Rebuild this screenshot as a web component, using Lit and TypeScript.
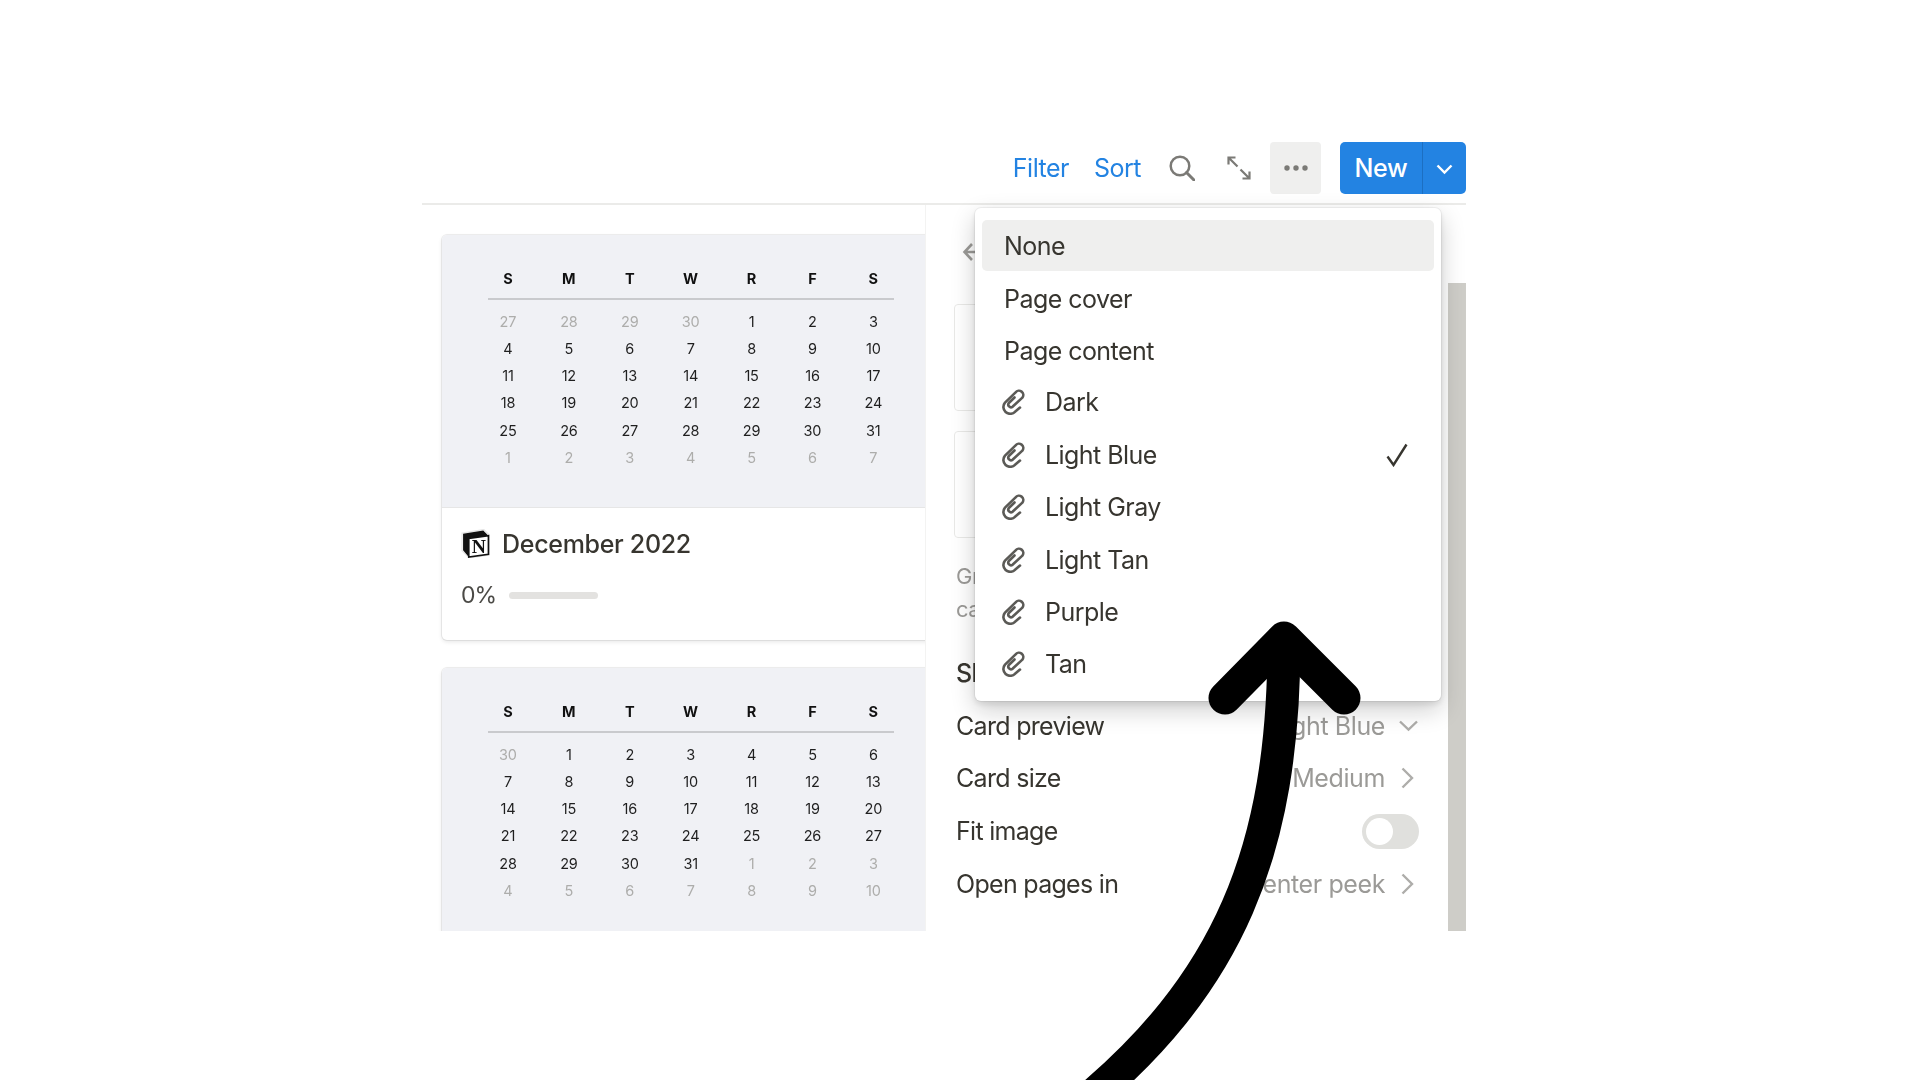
import { LitElement, html, css, svg } from "lit";
import { customElement } from "lit/decorators.js";

type Day = [string, boolean];

function month(prevStart: number, prevEnd: number, days: number, trail: number): Day[] {
  const out: Day[] = [];
  for (let d = prevStart; d <= prevEnd; d++) out.push([String(d), true]);
  for (let d = 1; d <= days; d++) out.push([String(d), false]);
  for (let d = 1; d <= trail; d++) out.push([String(d), true]);
  return out;
}

const DEC = month(27, 30, 31, 7);
const JAN = month(30, 30, 31, 10);
const HEAD = ["S", "M", "T", "W", "R", "F", "S"];
const OPTIONS = ["Dark", "Light Blue", "Light Gray", "Light Tan", "Purple", "Tan"];

const clip = svg`<path d="M19 18.6 14 22.8A6.8 6.8 0 0 1 4 13.6L14.6 3.4A3.8 3.8 0 0 1 21.4 8.6L11.5 17.8A2.7 2.7 0 0 1 7.8 14L13.5 8.5" fill="none" stroke="currentColor" stroke-width="2.6" stroke-linecap="round" stroke-linejoin="round"/>`;

@customElement("app-root")
export class AppRoot extends LitElement {
  static styles = css`
    :host { display: block; width: 1920px; height: 1080px; background: #fff; overflow: hidden; position: relative;
      font-family: Inter, "Liberation Sans", sans-serif; color: #37352f; }
    .page { padding: 142px 0 0 422px; box-sizing: border-box; height: 1080px; filter: blur(0.35px); }
    .frame { width: 1044px; height: 789px; display: flex; flex-direction: column; position: relative; }
    .toolbar { height: 63px; flex: none; box-sizing: border-box; padding-bottom: 9px; display: flex; align-items: stretch; justify-content: flex-end; border-bottom: 2px solid #ebebe9; }
    .link { color: #2383e2; font-size: 25px; letter-spacing: -0.5px; align-self: center; }
    .filter { margin-right: 25px; }
    .sort { margin-right: 28px; }
    .tool { display: block; align-self: center; }
    .search { margin-right: 32px; }
    .expand { margin-right: 19px; }
    .more { width: 51px; background: #efefee; border-radius: 4px; display: flex; align-items: center; justify-content: center; margin-right: 19px; }
    .new { width: 126px; background: #2383e2; border-radius: 5px; display: flex; color: #fff; }
    .new-label { width: 83px; box-sizing: border-box; border-right: 1px solid #1c6fc2; font-size: 25px; font-weight: 500; display: flex; align-items: center; justify-content: center; letter-spacing: -0.3px; }
    .new-caret { flex: 1; display: flex; align-items: center; justify-content: center; padding-top: 2px; }
    .body { flex: 1; display: flex; min-height: 0; overflow: hidden; }
    .cards { width: 503px; flex: none; overflow: hidden; box-sizing: border-box; padding: 30px 0 0 20px; }
    .card { width: 540px; border-radius: 5px; box-shadow: 0 0 0 1px rgba(15,15,15,.07), 0 2px 4px rgba(15,15,15,.1); margin-bottom: 28px; background: #fff; overflow: hidden; }
    .cover { height: 273px; box-sizing: border-box; background: #f0f1f5; border-bottom: 1px solid #e6e6e6; padding: 30px 0 0 35.5px; }
    .cal { width: 426.3px; display: grid; grid-template-columns: repeat(7, 1fr); grid-template-rows: 27.2px 15.6px; grid-auto-rows: 27.2px; align-items: center; text-align: center; font-size: 14.5px; color: #1f1f1f; letter-spacing: -0.2px; }
    .h { font-weight: 700; color: #111; font-size: 14.5px; letter-spacing: 0; }
    .rule { grid-column: 1 / -1; height: 1.5px; background: #c9cacd; margin: 6px 10px 0; align-self: start; }
    .off { color: #adadab; }
    .meta { height: 132px; box-sizing: border-box; padding: 17.5px 0 0 19px; }
    .title { display: flex; align-items: center; gap: 12px; font-size: 25px; font-weight: 500; height: 36px; letter-spacing: -0.3px; }
    .progress { display: flex; align-items: center; gap: 13px; margin-top: 16.5px; height: 34px; font-size: 23px; letter-spacing: -0.9px; color: #4b4a46; }
    .bar { width: 89px; height: 7px; border-radius: 4px; background: #e3e2e0; }
    .panel { flex: 1; display: flex; box-shadow: inset 1px 0 0 #f3f3f2; }
    .settings { flex: 1; box-sizing: border-box; padding: 37px 29px 0 31px; }
    .back { display: block; margin-left: 6px; height: 20px; }
    .box { margin: 0 0 20px -2px; height: 107px; box-sizing: border-box; border: 1px solid #e9e9e7; border-radius: 4px; }
    .box.first { margin-top: 42px; }
    .note { color: #9b9a97; font-size: 22px; letter-spacing: -0.5px; line-height: 33px; margin-top: 22px; }
    .row { height: 52.8px; display: flex; align-items: center; justify-content: space-between; font-size: 25px; letter-spacing: -0.7px; }
    .row.head { margin-top: 20.5px; font-weight: 500; }
    .value { color: #9b9a97; display: flex; align-items: center; gap: 14px; letter-spacing: -0.4px; }
    .chev { display: block; }
    .toggle { width: 57px; height: 35px; border-radius: 18px; background: #e0e0dd; padding: 4px; box-sizing: border-box; display: flex; }
    .knob { width: 27px; height: 27px; border-radius: 50%; background: #fff; }
    .scroll { width: 18px; flex: none; margin-top: 78px; background: #cecdc8; }
    .menu { position: absolute; left: 553px; top: 66px; width: 466px; height: 493px; box-sizing: border-box; padding: 12px 7px 0; background: #fff; border-radius: 6px;
      box-shadow: 0 0 0 1px rgba(15,15,15,.05), 0 3px 6px rgba(15,15,15,.1), 0 9px 24px rgba(15,15,15,.2); font-size: 25px; letter-spacing: -0.55px; }
    .item { height: 52.4px; display: flex; align-items: center; box-sizing: border-box; padding: 0 24px 0 22px; border-radius: 5px; }
    .item.sel { height: 51px; margin-bottom: 1.4px; background: #efefee; }
    .item.opt { padding-bottom: 2px; }
    .item svg.clip { color: #5b5a56; margin-left: -3px; margin-right: 18px; flex: none; }
    .item .check { margin-left: auto; margin-right: 2px; }
    .arrow { position: absolute; left: 0; top: 0; pointer-events: none; filter: blur(0.35px); }
  `;

  private calendar(days: Day[]) {
    return html`<div class="cal">
      ${HEAD.map((h) => html`<div class="h">${h}</div>`)}
      <div class="rule"></div>
      ${days.map(([d, off]) => html`<div class=${off ? "off" : ""}>${d}</div>`)}
    </div>`;
  }

  private chevRight() {
    return html`<svg class="chev" width="20" height="22" viewBox="0 0 20 22"><path d="M3.5 1.5 13 11 3.5 20.5" fill="none" stroke="#aeadaa" stroke-width="2.4"/></svg>`;
  }

  render() {
    return html`<div class="page"><div class="frame">
      <div class="toolbar">
        <span class="link filter">Filter</span>
        <span class="link sort">Sort</span>
        <svg class="tool search" width="26" height="26" viewBox="0 0 26 26"><circle cx="11" cy="11" r="9.3" fill="none" stroke="#7b7a76" stroke-width="2.5"/><path d="M17.5 17.5 25 25" stroke="#7b7a76" stroke-width="3" stroke-linecap="round"/></svg>
        <svg class="tool expand" width="24" height="24" viewBox="0 0 24 24" fill="none" stroke="#7b7a76" stroke-width="2.2"><path d="M1.5 8.5V1.5H8.5M1.5 1.5 10.5 10.5M22.5 15.5V22.5H15.5M22.5 22.5 13.5 13.5"/></svg>
        <div class="more"><svg width="24" height="6" viewBox="0 0 24 6" fill="#7b7a76"><circle cx="3" cy="3" r="2.7"/><circle cx="12" cy="3" r="2.7"/><circle cx="21" cy="3" r="2.7"/></svg></div>
        <div class="new">
          <div class="new-label">New</div>
          <div class="new-caret"><svg width="17" height="11" viewBox="0 0 17 11"><path d="M1.5 1.5 8.5 8.5 15.5 1.5" fill="none" stroke="#fff" stroke-width="2.4"/></svg></div>
        </div>
      </div>
      <div class="body">
        <div class="cards">
          <div class="card">
            <div class="cover">${this.calendar(DEC)}</div>
            <div class="meta">
              <div class="title">
                <svg width="29" height="29" viewBox="0 0 28 28"><path d="M1 4 22 .5 27.5 6V25L8 28 1 21Z" fill="#fff" stroke="#e6e6e6" stroke-width="1.2"/><path d="M2 4.5 21.5 1.5 26.5 6.5 7.5 9V27L2 20.5Z" fill="#111"/><path d="M7.5 9 26.5 6.5V24.5L7.5 27Z" fill="#fff" stroke="#111" stroke-width="1.6"/><text x="17" y="23" text-anchor="middle" font-family="Liberation Serif, serif" font-weight="700" font-size="19" fill="#111">N</text></svg>
                <span>December 2022</span>
              </div>
              <div class="progress"><span>0%</span><div class="bar"></div></div>
            </div>
          </div>
          <div class="card">
            <div class="cover">${this.calendar(JAN)}</div>
          </div>
        </div>
        <div class="panel">
          <div class="settings">
            <svg class="back" width="20" height="20" viewBox="0 0 20 20"><path d="M18 10H3M10 2 2.5 10 10 18" fill="none" stroke="#9b9a97" stroke-width="2.6"/></svg>
            <div class="box first"></div>
            <div class="box"></div>
            <div class="note">Group<br />cards</div>
            <div class="row head"><span>Show</span></div>
            <div class="row"><span>Card preview</span><span class="value">Light Blue<svg class="chev" width="20" height="20" viewBox="0 0 20 20"><path d="M1 5.5 9.5 13.5 18 5.5" fill="none" stroke="#aeadaa" stroke-width="2.4"/></svg></span></div>
            <div class="row"><span>Card size</span><span class="value">Medium${this.chevRight()}</span></div>
            <div class="row"><span>Fit image</span><div class="toggle"><div class="knob"></div></div></div>
            <div class="row"><span>Open pages in</span><span class="value">Center peek${this.chevRight()}</span></div>
          </div>
          <div class="scroll"></div>
        </div>
      </div>
      <div class="menu">
        <div class="item sel">None</div>
        <div class="item">Page cover</div>
        <div class="item">Page content</div>
        ${OPTIONS.map((o) => html`<div class="item opt">
          <svg class="clip" width="26" height="26" viewBox="0 0 26 26">${clip}</svg>
          <span>${o}</span>
          ${o === "Light Blue"
            ? html`<svg class="check" width="22" height="24" viewBox="0 0 22 24"><path d="M1.5 13.5 7.5 22 20.5 1.5" fill="none" stroke="#37352f" stroke-width="2.4"/></svg>`
            : ""}
        </div>`)}
      </div>
    </div></div>
    <svg class="arrow" width="1920" height="1080" viewBox="0 0 1920 1080" fill="none" stroke="#000" stroke-width="33" stroke-linecap="round" stroke-linejoin="round">
      <path d="M1225 698 1284 638 1344 698"/>
      <path d="M1284 640C1284 850 1230 985 1075 1110" stroke-linecap="butt"/>
    </svg>`;
  }
}
